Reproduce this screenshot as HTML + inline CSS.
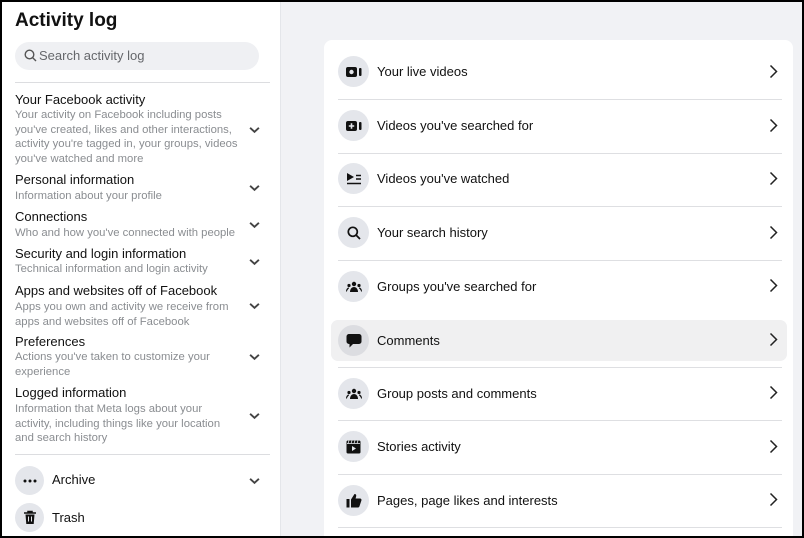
<!DOCTYPE html>
<html><head><meta charset="utf-8"><style>
*{box-sizing:border-box;margin:0;padding:0}
body{width:804px;height:538px;overflow:hidden;background:#000;font-family:"Liberation Sans",sans-serif;position:relative}
#frame{position:absolute;left:2px;top:2px;width:800px;height:534px;background:#f1f2f5;overflow:hidden}
#left{position:absolute;left:0;top:0;width:279px;height:534px;background:#fff;border-right:1px solid #e4e6ea}
.a{position:absolute;white-space:nowrap}
h1{position:absolute;left:13px;top:8px;font-size:19px;font-weight:bold;color:#111}
.search{position:absolute;left:13px;top:40px;width:244px;height:28px;border-radius:14px;background:#eff0f3;color:#65676b;font-size:13px;padding:6px 0 0 24px}
.hr{position:absolute;left:13px;width:255px;height:1px;background:#dcdde0}
.t{position:absolute;left:13px;font-size:13px;color:#111}
.d{position:absolute;left:13px;font-size:11.3px;color:#8a8d91;line-height:14.6px;width:225px}
.chev{position:absolute;left:247px;width:11px;height:8px}
#card{position:absolute;left:322px;top:38px;width:469px;height:520px;background:#fff;border-radius:8px}
.row{position:absolute;left:7px;width:456px;height:41px}
.row.hl{background:#f0f0f1;border-radius:7px}
.ic{position:absolute;left:7px;top:5px;width:31px;height:31px;border-radius:50%;background:#e4e6eb;display:flex;align-items:center;justify-content:center}
.lb{position:absolute;left:46px;top:13px;font-size:13px;color:#111}
.sep{position:absolute;left:14px;width:444px;height:1px;background:#dedfe2}
</style></head><body><div id="frame">
<div id="left">
<h1>Activity log</h1>
<div class="search"><svg style="position:absolute;left:9px;top:7px" width="13" height="13" viewBox="0 0 13 13"><circle cx="5.5" cy="5.5" r="4.3" fill="none" stroke="#555" stroke-width="1.4"/><path d="M8.6 8.6L12 12" stroke="#555" stroke-width="1.4"/></svg>Search activity log</div>
<div class="hr" style="top:80px"></div>
<div class="t" style="top:90px">Your Facebook activity</div>
<div class="d" style="top:106px">Your activity on Facebook including posts you've created, likes and other interactions, activity you're tagged in, your groups, videos you've watched and more</div>
<div class="t" style="top:170px">Personal information</div>
<div class="d" style="top:187px">Information about your profile</div>
<div class="t" style="top:207px">Connections</div>
<div class="d" style="top:224px;width:240px">Who and how you've connected with people</div>
<div class="t" style="top:244px">Security and login information</div>
<div class="d" style="top:260px">Technical information and login activity</div>
<div class="t" style="top:281px">Apps and websites off of Facebook</div>
<div class="d" style="top:298px">Apps you own and activity we receive from apps and websites off of Facebook</div>
<div class="t" style="top:332px">Preferences</div>
<div class="d" style="top:348px">Actions you've taken to customize your experience</div>
<div class="t" style="top:383px">Logged information</div>
<div class="d" style="top:400px;width:218px">Information that Meta logs about your activity, including things like your location and search history</div>
<svg class="chev" style="top:124px" viewBox="0 0 10 7"><path d="M1 1.5L5 5.2L9 1.5" fill="none" stroke="#444" stroke-width="1.7"/></svg>
<svg class="chev" style="top:182px" viewBox="0 0 10 7"><path d="M1 1.5L5 5.2L9 1.5" fill="none" stroke="#444" stroke-width="1.7"/></svg>
<svg class="chev" style="top:219px" viewBox="0 0 10 7"><path d="M1 1.5L5 5.2L9 1.5" fill="none" stroke="#444" stroke-width="1.7"/></svg>
<svg class="chev" style="top:256px" viewBox="0 0 10 7"><path d="M1 1.5L5 5.2L9 1.5" fill="none" stroke="#444" stroke-width="1.7"/></svg>
<svg class="chev" style="top:300px" viewBox="0 0 10 7"><path d="M1 1.5L5 5.2L9 1.5" fill="none" stroke="#444" stroke-width="1.7"/></svg>
<svg class="chev" style="top:351px" viewBox="0 0 10 7"><path d="M1 1.5L5 5.2L9 1.5" fill="none" stroke="#444" stroke-width="1.7"/></svg>
<svg class="chev" style="top:410px" viewBox="0 0 10 7"><path d="M1 1.5L5 5.2L9 1.5" fill="none" stroke="#444" stroke-width="1.7"/></svg>
<div class="hr" style="top:452px"></div>
<div class="ic" style="left:13px;top:464px;width:29px;height:29px;position:absolute"><svg width="14" height="4"><circle cx="2" cy="2" r="1.5" fill="#111"/><circle cx="7" cy="2" r="1.5" fill="#111"/><circle cx="12" cy="2" r="1.5" fill="#111"/></svg></div>
<div class="a" style="left:50px;top:470px;font-size:13px;color:#111">Archive</div>
<svg class="chev" style="top:475px" viewBox="0 0 10 7"><path d="M1 1.5L5 5.2L9 1.5" fill="none" stroke="#444" stroke-width="1.7"/></svg>
<div class="ic" style="left:13px;top:501px;width:29px;height:29px;position:absolute"><svg width="14" height="15" viewBox="0 0 14 15"><path d="M1 3h12M5 3V1.5h4V3" stroke="#111" stroke-width="1.5" fill="none"/><path d="M2.5 4.5h9l-.8 9.5h-7.4z" fill="#111"/><path d="M5.5 6.5v5M8.5 6.5v5" stroke="#e4e6eb" stroke-width="1"/></svg></div>
<div class="a" style="left:50px;top:508px;font-size:13px;color:#111">Trash</div>
</div>
<div id="card">
<div class="row" style="top:11px"><div class="ic"><svg width="16" height="12" viewBox="0 0 16 12"><rect x="0" y="1" width="11" height="10" rx="2" fill="#111"/><circle cx="5.5" cy="6" r="2.2" fill="#e4e6eb"/><rect x="13" y="2" width="2.5" height="8" rx="1" fill="#111"/></svg></div><div class="lb">Your live videos</div></div>
<div class="sep" style="top:59px"></div>
<div class="row" style="top:65px"><div class="ic"><svg width="16" height="12" viewBox="0 0 16 12"><rect x="0" y="1" width="11" height="10" rx="2" fill="#111"/><path d="M5.5 3.3v5.4M2.8 6h5.4" stroke="#e4e6eb" stroke-width="1.6"/><rect x="13" y="2" width="2.5" height="8" rx="1" fill="#111"/></svg></div><div class="lb">Videos you've searched for</div></div>
<div class="sep" style="top:113px"></div>
<div class="row" style="top:118px"><div class="ic"><svg width="16" height="13" viewBox="0 0 16 13"><path d="M1 1l7 4-7 4z" fill="#111"/><path d="M10 3.5h5M10 7h5M1 11.5h14" stroke="#111" stroke-width="1.5"/></svg></div><div class="lb">Videos you've watched</div></div>
<div class="sep" style="top:166px"></div>
<div class="row" style="top:172px"><div class="ic"><svg width="14" height="14" viewBox="0 0 14 14"><circle cx="5.8" cy="5.8" r="4.5" fill="none" stroke="#111" stroke-width="1.7"/><path d="M9 9l4 4" stroke="#111" stroke-width="1.8"/></svg></div><div class="lb">Your search history</div></div>
<div class="sep" style="top:220px"></div>
<div class="row" style="top:226px"><div class="ic"><svg width="16" height="12" viewBox="0 0 16 12"><circle cx="8" cy="3" r="2.2" fill="#111"/><circle cx="3" cy="4.5" r="1.6" fill="#111"/><circle cx="13" cy="4.5" r="1.6" fill="#111"/><path d="M4 11c0-3 1.8-5 4-5s4 2 4 5z" fill="#111"/><path d="M0.5 10.5c0-2 1-3.5 2.5-3.5M15.5 10.5c0-2-1-3.5-2.5-3.5" fill="#111" stroke="#111"/></svg></div><div class="lb">Groups you've searched for</div></div>
<div class="row hl" style="top:280px"><div class="ic" style="background:#dcdde1"><svg width="16" height="16" viewBox="0 0 16 16"><path d="M3 1h10a2.5 2.5 0 0 1 2.5 2.5v5A2.5 2.5 0 0 1 13 11H7l-3.5 3.5V11H3A2.5 2.5 0 0 1 .5 8.5v-5A2.5 2.5 0 0 1 3 1z" fill="#111"/></svg></div><div class="lb">Comments</div></div>
<div class="sep" style="top:327px"></div>
<div class="row" style="top:333px"><div class="ic"><svg width="16" height="12" viewBox="0 0 16 12"><circle cx="8" cy="3" r="2.2" fill="#111"/><circle cx="3" cy="4.5" r="1.6" fill="#111"/><circle cx="13" cy="4.5" r="1.6" fill="#111"/><path d="M4 11c0-3 1.8-5 4-5s4 2 4 5z" fill="#111"/><path d="M0.5 10.5c0-2 1-3.5 2.5-3.5M15.5 10.5c0-2-1-3.5-2.5-3.5" fill="#111" stroke="#111"/></svg></div><div class="lb">Group posts and comments</div></div>
<div class="sep" style="top:380px"></div>
<div class="row" style="top:386px"><div class="ic"><svg width="15" height="14" viewBox="0 0 15 14"><rect x="0.5" y="0.5" width="14" height="13" rx="1.5" fill="#111"/><path d="M1 3.5h13" stroke="#e4e6eb" stroke-width=".8"/><path d="M3 .5l-1 3M6 .5l-1 3M9 .5l-1 3M12 .5l-1 3" stroke="#e4e6eb" stroke-width=".8"/><path d="M6 6v5l4-2.5z" fill="#e4e6eb"/></svg></div><div class="lb">Stories activity</div></div>
<div class="sep" style="top:434px"></div>
<div class="row" style="top:440px"><div class="ic"><svg width="16" height="15" viewBox="0 0 16 15"><rect x="0.5" y="6" width="3" height="8.5" fill="#111"/><path d="M5 6.5L8.5 1c1.5 0 2 1 1.6 2.5L9.6 5.5H14a1.5 1.5 0 0 1 1.4 2l-2 6a1.5 1.5 0 0 1-1.4 1H5z" fill="#111"/></svg></div><div class="lb">Pages, page likes and interests</div></div>
<div class="sep" style="top:487px"></div>
<svg class="a" style="left:445px;top:24px" width="9" height="15" viewBox="0 0 9 15"><path d="M1.5 1.5L7.5 7.5L1.5 13.5" fill="none" stroke="#222" stroke-width="1.5"/></svg>
<svg class="a" style="left:445px;top:78px" width="9" height="15" viewBox="0 0 9 15"><path d="M1.5 1.5L7.5 7.5L1.5 13.5" fill="none" stroke="#222" stroke-width="1.5"/></svg>
<svg class="a" style="left:445px;top:131px" width="9" height="15" viewBox="0 0 9 15"><path d="M1.5 1.5L7.5 7.5L1.5 13.5" fill="none" stroke="#222" stroke-width="1.5"/></svg>
<svg class="a" style="left:445px;top:185px" width="9" height="15" viewBox="0 0 9 15"><path d="M1.5 1.5L7.5 7.5L1.5 13.5" fill="none" stroke="#222" stroke-width="1.5"/></svg>
<svg class="a" style="left:445px;top:238px" width="9" height="15" viewBox="0 0 9 15"><path d="M1.5 1.5L7.5 7.5L1.5 13.5" fill="none" stroke="#222" stroke-width="1.5"/></svg>
<svg class="a" style="left:445px;top:292px" width="9" height="15" viewBox="0 0 9 15"><path d="M1.5 1.5L7.5 7.5L1.5 13.5" fill="none" stroke="#222" stroke-width="1.5"/></svg>
<svg class="a" style="left:445px;top:345px" width="9" height="15" viewBox="0 0 9 15"><path d="M1.5 1.5L7.5 7.5L1.5 13.5" fill="none" stroke="#222" stroke-width="1.5"/></svg>
<svg class="a" style="left:445px;top:399px" width="9" height="15" viewBox="0 0 9 15"><path d="M1.5 1.5L7.5 7.5L1.5 13.5" fill="none" stroke="#222" stroke-width="1.5"/></svg>
<svg class="a" style="left:445px;top:452px" width="9" height="15" viewBox="0 0 9 15"><path d="M1.5 1.5L7.5 7.5L1.5 13.5" fill="none" stroke="#222" stroke-width="1.5"/></svg>
</div>
</div></body></html>
